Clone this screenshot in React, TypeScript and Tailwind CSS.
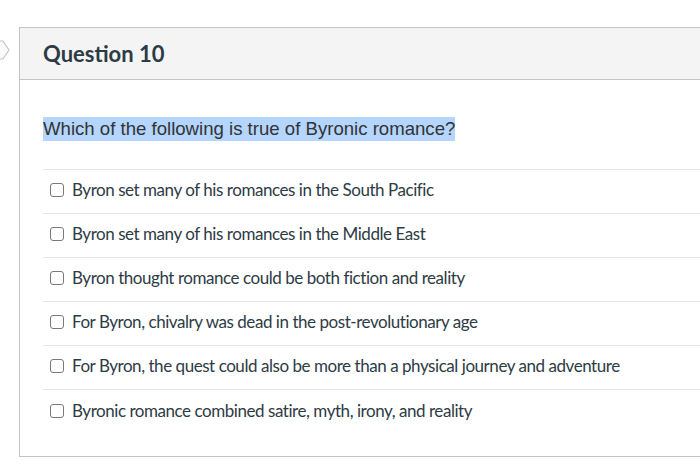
import React from "react";

const options = [
  "Byron set many of his romances in the South Pacific",
  "Byron set many of his romances in the Middle East",
  "Byron thought romance could be both fiction and reality",
  "For Byron, chivalry was dead in the post-revolutionary age",
  "For Byron, the quest could also be more than a physical journey and adventure",
  "Byronic romance combined satire, myth, irony, and reality",
];

export default function App() {
  return (
    <div className="relative w-[700px] h-[467px] overflow-hidden bg-white" style={{ fontFamily: "Lato, sans-serif" }}>
      <svg className="absolute left-0 top-[40px]" width="10" height="20" viewBox="0 0 10 20">
        <path d="M-2 1 L3 1 L9 10 L3 19 L-2 19" fill="#fafafa" stroke="#c4c4c4" strokeWidth="1.2" />
      </svg>
      <div className="ml-[19px] mt-[27px] w-[720px] h-[430px] border-[1.5px] border-[#c4c4c4] flex flex-col">
        <div className="h-[52px] bg-[#f4f4f4] border-b-[1.5px] border-[#c4c4c4] flex items-center pl-[23px]">
          <span className="text-[22px] font-bold text-[#2d3b45]">Question 10</span>
        </div>
        <div className="pl-[23px] pt-[37px]">
          <div className="h-[24px] flex items-center">
            <span className="bg-[#b4d5fe] text-[18.6px] leading-[24px] text-[#333]" style={{ fontFamily: '"Liberation Sans", Arial, sans-serif' }}>
              Which of the following is true of Byronic romance?
            </span>
          </div>
          <div className="mt-[28px] border-t-[1.5px] border-[#e6e6e6]">
            {options.map((o, i) => (
              <div
                key={i}
                className={`h-[44px] flex items-center pl-[7px] pb-[3px] ${i < options.length - 1 ? "border-b-[1.5px] border-[#e6e6e6]" : ""}`}
              >
                <span className="w-[14px] h-[14px] border-[1.5px] border-[#7a7a7a] rounded-[3px] bg-white mr-[8px] shrink-0" />
                <span className="text-[17px] tracking-[-0.45px] text-[#2d3b45]">{o}</span>
              </div>
            ))}
          </div>
        </div>
      </div>
    </div>
  );
}
